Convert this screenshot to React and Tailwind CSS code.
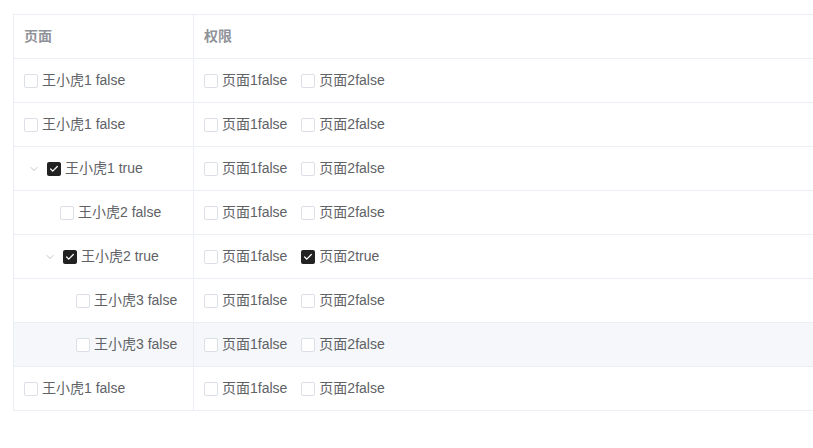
import { ChevronDown, Check } from "lucide-react";

const ROWS = [
  { level: 0, name: "王小虎1 false", checked: false, hasChildren: false, p2: false },
  { level: 0, name: "王小虎1 false", checked: false, hasChildren: false, p2: false },
  { level: 0, name: "王小虎1 true", checked: true, hasChildren: true, p2: false },
  { level: 1, name: "王小虎2 false", checked: false, hasChildren: false, p2: false },
  { level: 1, name: "王小虎2 true", checked: true, hasChildren: true, p2: true },
  { level: 2, name: "王小虎3 false", checked: false, hasChildren: false, p2: false },
  { level: 2, name: "王小虎3 false", checked: false, hasChildren: false, p2: false, hover: true },
  { level: 0, name: "王小虎1 false", checked: false, hasChildren: false, p2: false },
];

function Box({ checked }) {
  return checked ? (
    <span className="w-[14px] h-[14px] rounded-[2px] bg-[#222222] flex items-center justify-center flex-shrink-0">
      <Check size={10} strokeWidth={3} className="text-white" />
    </span>
  ) : (
    <span className="w-[14px] h-[14px] rounded-[2px] border border-[#dcdfe6] bg-white flex-shrink-0" />
  );
}

function Indent({ level }) {
  if (level === 0) return null;
  return <span className={level === 1 ? "w-[16px] flex-shrink-0" : "w-[32px] flex-shrink-0"} />;
}

export default function App() {
  return (
    <div
      className="w-[813px] h-[448px] overflow-hidden bg-white pt-[14px] pl-[13px] text-[14px] text-[#606266]"
      style={{ fontFamily: '"Liberation Sans", "Noto Sans CJK SC", sans-serif' }}
    >
      <div className="w-[820px] border-l border-t border-[#ebeef5]">
        {/* Header */}
        <div className="flex h-[44px] border-b border-[#ebeef5] text-[#909399] font-bold">
          <div className="w-[180px] flex items-center pl-[10px] border-r border-[#ebeef5]">页面</div>
          <div className="flex-1 flex items-center pl-[10px]">权限</div>
        </div>

        {ROWS.map((r, i) => (
          <div
            key={i}
            className={`flex h-[44px] border-b border-[#ebeef5] ${r.hover ? "bg-[#f5f7fa]" : "bg-white"}`}
          >
            <div className="w-[180px] flex items-center pl-[10px] border-r border-[#ebeef5]">
              <Indent level={r.level} />
              {r.hasChildren ? (
                <span className="w-[23px] flex-shrink-0 flex items-center pl-[4px]">
                  <ChevronDown size={12} strokeWidth={1.5} className="text-[#a8abb2]" />
                </span>
              ) : r.level > 0 ? (
                <span className="w-[20px] flex-shrink-0" />
              ) : null}
              <Box checked={r.checked} />
              <span className="ml-[4px] whitespace-nowrap">{r.name}</span>
            </div>
            <div className="flex-1 flex items-center pl-[10px]">
              <Box checked={false} />
              <span className="ml-[4px] whitespace-nowrap">页面1false</span>
              <span className="ml-[14px]" />
              <Box checked={r.p2} />
              <span className="ml-[4px] whitespace-nowrap">{r.p2 ? "页面2true" : "页面2false"}</span>
            </div>
          </div>
        ))}
      </div>
    </div>
  );
}
